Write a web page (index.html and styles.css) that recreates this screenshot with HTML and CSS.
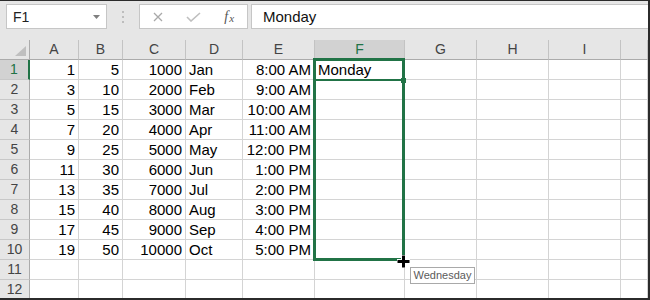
FILE: index.html
```html
<!DOCTYPE html>
<html lang="en">
<head>
  <meta charset="UTF-8" />
  <title>Fill Series</title>
  <link rel="stylesheet" href="styles.css">
</head>
<body>
  <div class="window">
    <div class="formula-bar">
      <div class="name-box">
        <span>F1</span>
        <svg width="7" height="4" viewBox="0 0 7 4"><polygon points="0,0 7,0 3.5,4" fill="#7f7f7f"/></svg>
      </div>
      <div class="grip">
        <svg width="2" height="12" viewBox="0 0 2 12">
          <rect x="0" y="0" width="2" height="2" fill="#bdbdbd"/>
          <rect x="0" y="5" width="2" height="2" fill="#bdbdbd"/>
          <rect x="0" y="10" width="2" height="2" fill="#bdbdbd"/>
        </svg>
      </div>
      <div class="fx-box">
        <span class="fx-btn">
          <svg width="10" height="10" viewBox="0 0 10 10"><path d="M1 1 L9 9 M9 1 L1 9" stroke="#a9a9a9" stroke-width="1.3"/></svg>
        </span>
        <span class="fx-btn">
          <svg width="15" height="10" viewBox="0 0 15 10"><path d="M1 5 L5 9 L14 1" stroke="#bfbfbf" stroke-width="1.6" fill="none"/></svg>
        </span>
        <span class="fx-btn fx-label"><i>f</i><i class="fx-x">x</i></span>
      </div>
      <div class="formula-input">Monday</div>
    </div>

    <div class="sheet">
      <table class="grid">
        <colgroup>
          <col class="w-row"><col class="w-a"><col class="w-b"><col class="w-c"><col class="w-d">
          <col class="w-e"><col class="w-f"><col class="w-g"><col class="w-h"><col class="w-i"><col>
        </colgroup>
        <tr class="head">
          <th class="corner"><svg width="30" height="19" viewBox="0 0 30 19"><polygon points="15,16 26,16 26,6" fill="#bfbfbf"/></svg></th>
          <th>A</th><th>B</th><th>C</th><th>D</th><th>E</th><th class="sel-col">F</th><th>G</th><th>H</th><th>I</th><th></th>
        </tr>
        <tr><th class="rh sel-row">1</th><td class="n">1</td><td class="n">5</td><td class="n">1000</td><td>Jan</td><td class="n">8:00 AM</td><td>Monday</td><td></td><td></td><td></td><td></td></tr>
        <tr><th class="rh">2</th><td class="n">3</td><td class="n">10</td><td class="n">2000</td><td>Feb</td><td class="n">9:00 AM</td><td></td><td></td><td></td><td></td><td></td></tr>
        <tr><th class="rh">3</th><td class="n">5</td><td class="n">15</td><td class="n">3000</td><td>Mar</td><td class="n">10:00 AM</td><td></td><td></td><td></td><td></td><td></td></tr>
        <tr><th class="rh">4</th><td class="n">7</td><td class="n">20</td><td class="n">4000</td><td>Apr</td><td class="n">11:00 AM</td><td></td><td></td><td></td><td></td><td></td></tr>
        <tr><th class="rh">5</th><td class="n">9</td><td class="n">25</td><td class="n">5000</td><td>May</td><td class="n">12:00 PM</td><td></td><td></td><td></td><td></td><td></td></tr>
        <tr><th class="rh">6</th><td class="n">11</td><td class="n">30</td><td class="n">6000</td><td>Jun</td><td class="n">1:00 PM</td><td></td><td></td><td></td><td></td><td></td></tr>
        <tr><th class="rh">7</th><td class="n">13</td><td class="n">35</td><td class="n">7000</td><td>Jul</td><td class="n">2:00 PM</td><td></td><td></td><td></td><td></td><td></td></tr>
        <tr><th class="rh">8</th><td class="n">15</td><td class="n">40</td><td class="n">8000</td><td>Aug</td><td class="n">3:00 PM</td><td></td><td></td><td></td><td></td><td></td></tr>
        <tr><th class="rh">9</th><td class="n">17</td><td class="n">45</td><td class="n">9000</td><td>Sep</td><td class="n">4:00 PM</td><td></td><td></td><td></td><td></td><td></td></tr>
        <tr><th class="rh">10</th><td class="n">19</td><td class="n">50</td><td class="n">10000</td><td>Oct</td><td class="n">5:00 PM</td><td></td><td></td><td></td><td></td><td></td></tr>
        <tr><th class="rh">11</th><td></td><td></td><td></td><td></td><td></td><td></td><td></td><td></td><td></td><td></td></tr>
        <tr><th class="rh">12</th><td></td><td></td><td></td><td></td><td></td><td></td><td></td><td></td><td></td><td></td></tr>
      </table>

      <!-- fill range drag overlay -->
      <div class="range"></div>
      <div class="active-edge"></div>
      <div class="handle"></div>
      <svg class="cross" width="15" height="15" viewBox="0 0 15 15">
        <path d="M1 7.5 H14 M7.5 1 V14" stroke="#fff" stroke-width="5"/>
        <path d="M1.5 7.5 H13.5 M7.5 1.5 V13.5" stroke="#000" stroke-width="3"/>
      </svg>
      <div class="tip">Wednesday</div>
    </div>
  </div>
</body>
</html>
```

FILE: styles.css
```css
body {
  margin: 0;
  font-family: "Liberation Sans", Arial, sans-serif;
}

.window {
  width: 650px;
  height: 300px;
  box-sizing: border-box;
  border-top: 1px solid #2b2b2b;
  border-right: 2px solid #2b2b2b;
  border-bottom: 2px solid #2b2b2b;
  overflow: hidden;
  background: #fff;
}

/* formula bar */
.formula-bar {
  display: flex;
  align-items: flex-start;
  height: 39px;
  box-sizing: border-box;
  padding: 3px 0 0 6px;
  background: #e6e6e6;
}

.name-box {
  width: 101px;
  height: 25px;
  box-sizing: border-box;
  border: 1px solid #c6c6c6;
  background: #fff;
  display: flex;
  align-items: center;
  justify-content: space-between;
  padding: 0 6px;
  font-size: 14px;
  color: #222;
}

.grip {
  width: 32px;
  height: 25px;
  display: flex;
  align-items: center;
  justify-content: center;
}

.fx-box {
  width: 109px;
  height: 25px;
  box-sizing: border-box;
  border: 1px solid #c6c6c6;
  background: #fff;
  display: flex;
  align-items: center;
}

.fx-btn {
  width: 36px;
  display: flex;
  justify-content: center;
  align-items: center;
}

.fx-label {
  font-family: "Liberation Serif", "Times New Roman", serif;
  font-size: 14px;
  color: #555;
}

.fx-x {
  font-size: 11px;
  margin-left: 1px;
  position: relative;
  top: 1px;
}

.formula-input {
  flex: 1;
  margin-left: 3px;
  height: 25px;
  box-sizing: border-box;
  border: 1px solid #c6c6c6;
  border-right: none;
  background: #fff;
  padding-left: 11px;
  font-size: 15px;
  line-height: 23px;
  color: #111;
}

/* grid */
.sheet {
  position: relative;
}

.grid {
  border-collapse: separate;
  border-spacing: 0;
  table-layout: fixed;
  width: 648px;
  font-size: 15px;
}

.w-row { width: 30px; }
.w-a { width: 49px; }
.w-b { width: 44px; }
.w-c { width: 63px; }
.w-d { width: 57px; }
.w-e { width: 72px; }
.w-f { width: 90px; }
.w-g { width: 72px; }
.w-h { width: 72px; }
.w-i { width: 72px; }

.grid tr {
  height: 20px;
}

.grid td,
.grid th {
  box-sizing: border-box;
  height: 20px;
  padding: 0 3px;
  border-right: 1px solid #d4d4d4;
  border-bottom: 1px solid #d4d4d4;
  white-space: nowrap;
  overflow: hidden;
  line-height: 19px;
  text-align: left;
  color: #000;
}

.grid td.n {
  text-align: right;
}

.head th {
  background: #e6e6e6;
  color: #444;
  font-weight: normal;
  font-size: 14px;
  text-align: center;
  border-right-color: #c3c3c3;
  border-bottom-color: #ababab;
}

.head th.corner {
  padding: 0;
  border-right-color: #ababab;
}

.corner svg {
  display: block;
}

.grid th.rh {
  background: #e6e6e6;
  color: #444;
  font-weight: normal;
  font-size: 14px;
  text-align: center;
  padding: 0;
  border-right-color: #ababab;
  border-bottom-color: #c8c8c8;
}

.head th.sel-col {
  background: #d2d2d2;
  color: #217346;
}

.grid th.sel-row {
  background: #d2d2d2;
  color: #217346;
  border-right: 2px solid #217346;
}

/* overlay: fill drag */
.range {
  position: absolute;
  left: 313px;
  top: 18px;
  width: 92px;
  height: 203px;
  box-sizing: border-box;
  border: 3px solid #217346;
}

.active-edge {
  position: absolute;
  left: 315px;
  top: 39px;
  width: 87px;
  height: 2px;
  background: #217346;
}

.handle {
  position: absolute;
  left: 401px;
  top: 38px;
  width: 5px;
  height: 5px;
  background: #217346;
}

.cross {
  position: absolute;
  left: 396px;
  top: 214px;
}

.tip {
  position: absolute;
  left: 410px;
  top: 227px;
  width: 65px;
  height: 17px;
  box-sizing: border-box;
  border: 1px solid #a9a9a9;
  background: #fff;
  font-size: 11px;
  line-height: 15px;
  color: #5b5b5b;
  text-align: center;
}
```
